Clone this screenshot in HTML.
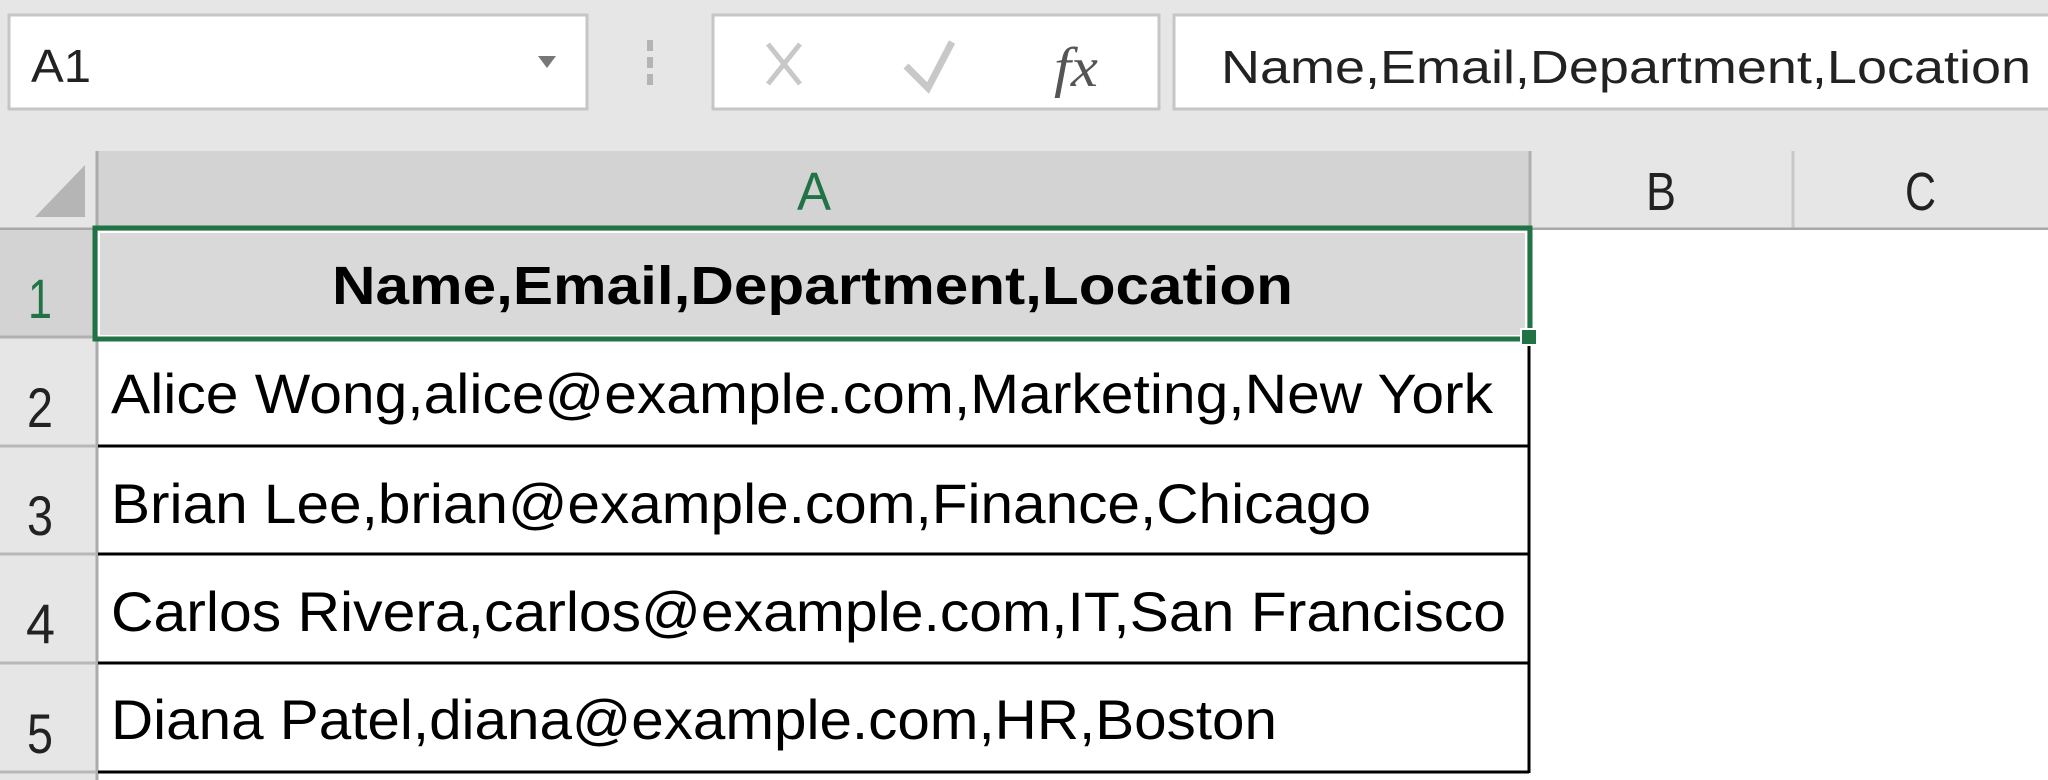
<!DOCTYPE html>
<html><head><meta charset="utf-8"><style>
html,body{margin:0;padding:0;background:#e6e6e6;}
svg{display:block;}
text{font-family:"Liberation Sans",Arial,sans-serif;}
</style></head><body>
<svg width="2048" height="780" viewBox="0 0 2048 780" xmlns="http://www.w3.org/2000/svg">
<rect x="0" y="0" width="2048" height="780" fill="#e6e6e6"/>
<rect x="9" y="15" width="578" height="94" fill="#fff" stroke="#c6c6c6" stroke-width="3"/>
<text x="31" y="82" font-size="46" fill="#222" textLength="60" lengthAdjust="spacingAndGlyphs">A1</text>
<path d="M538 56 L556 56 L547 68 Z" fill="#777"/>
<rect x="647" y="40" width="6" height="11" fill="#b4b4b4"/>
<rect x="647" y="57" width="6" height="11" fill="#b4b4b4"/>
<rect x="647" y="74" width="6" height="11" fill="#b4b4b4"/>
<rect x="713" y="15" width="446" height="94" fill="#fff" stroke="#c6c6c6" stroke-width="3"/>
<path d="M768 44 L800 84 M800 44 L768 84" stroke="#c8c8c8" stroke-width="5"/>
<path d="M906 66 L928 88 L952 42" stroke="#c8c8c8" stroke-width="7" fill="none"/>
<text x="1054" y="86" font-size="56" font-style="italic" fill="#555" style="font-family:'Liberation Serif',serif" textLength="44" lengthAdjust="spacingAndGlyphs">fx</text>
<rect x="1174" y="15" width="890" height="94" fill="#fff" stroke="#c6c6c6" stroke-width="3"/>
<text x="1221" y="83" font-size="46" fill="#222" textLength="810" lengthAdjust="spacingAndGlyphs">Name,Email,Department,Location</text>
<rect x="97" y="151" width="1432" height="77" fill="#d3d3d3"/>
<line x1="1530" y1="151" x2="1530" y2="228" stroke="#b0b0b0" stroke-width="3"/>
<line x1="1793" y1="151" x2="1793" y2="228" stroke="#c8c8c8" stroke-width="3"/>
<line x1="0" y1="229" x2="2048" y2="229" stroke="#a8a8a8" stroke-width="3"/>
<path d="M35 217 L85 165 L85 217 Z" fill="#b5b5b5"/>
<text x="797" y="210" font-size="54" fill="#217346" textLength="34" lengthAdjust="spacingAndGlyphs">A</text>
<text x="1646" y="210" font-size="54" fill="#222" textLength="30" lengthAdjust="spacingAndGlyphs">B</text>
<text x="1905" y="210" font-size="54" fill="#222" textLength="31" lengthAdjust="spacingAndGlyphs">C</text>
<rect x="97" y="230" width="1951" height="550" fill="#fff"/>
<rect x="0" y="230" width="96" height="550" fill="#e6e6e6"/>
<rect x="0" y="230" width="96" height="107" fill="#d3d3d3"/>
<line x1="97" y1="151" x2="97" y2="780" stroke="#ababab" stroke-width="3"/>
<line x1="0" y1="337" x2="96" y2="337" stroke="#b0b0b0" stroke-width="3"/>
<line x1="0" y1="446" x2="96" y2="446" stroke="#b8b8b8" stroke-width="3"/>
<line x1="0" y1="554" x2="96" y2="554" stroke="#b8b8b8" stroke-width="3"/>
<line x1="0" y1="663" x2="96" y2="663" stroke="#b8b8b8" stroke-width="3"/>
<line x1="0" y1="772" x2="96" y2="772" stroke="#b8b8b8" stroke-width="3"/>
<text x="28" y="318" font-size="56" fill="#217346" textLength="24" lengthAdjust="spacingAndGlyphs">1</text>
<text x="27" y="427" font-size="56" fill="#222" textLength="26" lengthAdjust="spacingAndGlyphs">2</text>
<text x="27" y="535" font-size="56" fill="#222" textLength="26" lengthAdjust="spacingAndGlyphs">3</text>
<text x="26" y="643" font-size="56" fill="#222" textLength="29" lengthAdjust="spacingAndGlyphs">4</text>
<text x="27" y="753" font-size="56" fill="#222" textLength="26" lengthAdjust="spacingAndGlyphs">5</text>
<rect x="97" y="230" width="1432" height="108" fill="#d9d9d9"/>
<line x1="98" y1="446" x2="1529" y2="446" stroke="#000" stroke-width="3"/>
<line x1="98" y1="554" x2="1529" y2="554" stroke="#000" stroke-width="3"/>
<line x1="98" y1="663" x2="1529" y2="663" stroke="#000" stroke-width="3"/>
<line x1="98" y1="772" x2="1529" y2="772" stroke="#000" stroke-width="3"/>
<line x1="1529" y1="340" x2="1529" y2="773" stroke="#000" stroke-width="3"/>
<rect x="99" y="232" width="1427" height="104" fill="none" stroke="#fff" stroke-width="2"/>
<rect x="95" y="228" width="1435" height="111" fill="none" stroke="#217346" stroke-width="5"/>
<rect x="1521" y="329" width="16" height="16" fill="#217346" stroke="#fff" stroke-width="2"/>
<text x="332" y="304" font-size="54" font-weight="bold" fill="#000" textLength="961" lengthAdjust="spacingAndGlyphs">Name,Email,Department,Location</text>
<text x="111" y="413" font-size="56" fill="#000" textLength="1382" lengthAdjust="spacingAndGlyphs">Alice Wong,alice@example.com,Marketing,New York</text>
<text x="111" y="523" font-size="56" fill="#000" textLength="1260" lengthAdjust="spacingAndGlyphs">Brian Lee,brian@example.com,Finance,Chicago</text>
<text x="111" y="631" font-size="56" fill="#000" textLength="1395" lengthAdjust="spacingAndGlyphs">Carlos Rivera,carlos@example.com,IT,San Francisco</text>
<text x="111" y="739" font-size="56" fill="#000" textLength="1166" lengthAdjust="spacingAndGlyphs">Diana Patel,diana@example.com,HR,Boston</text>
</svg>
</body></html>
